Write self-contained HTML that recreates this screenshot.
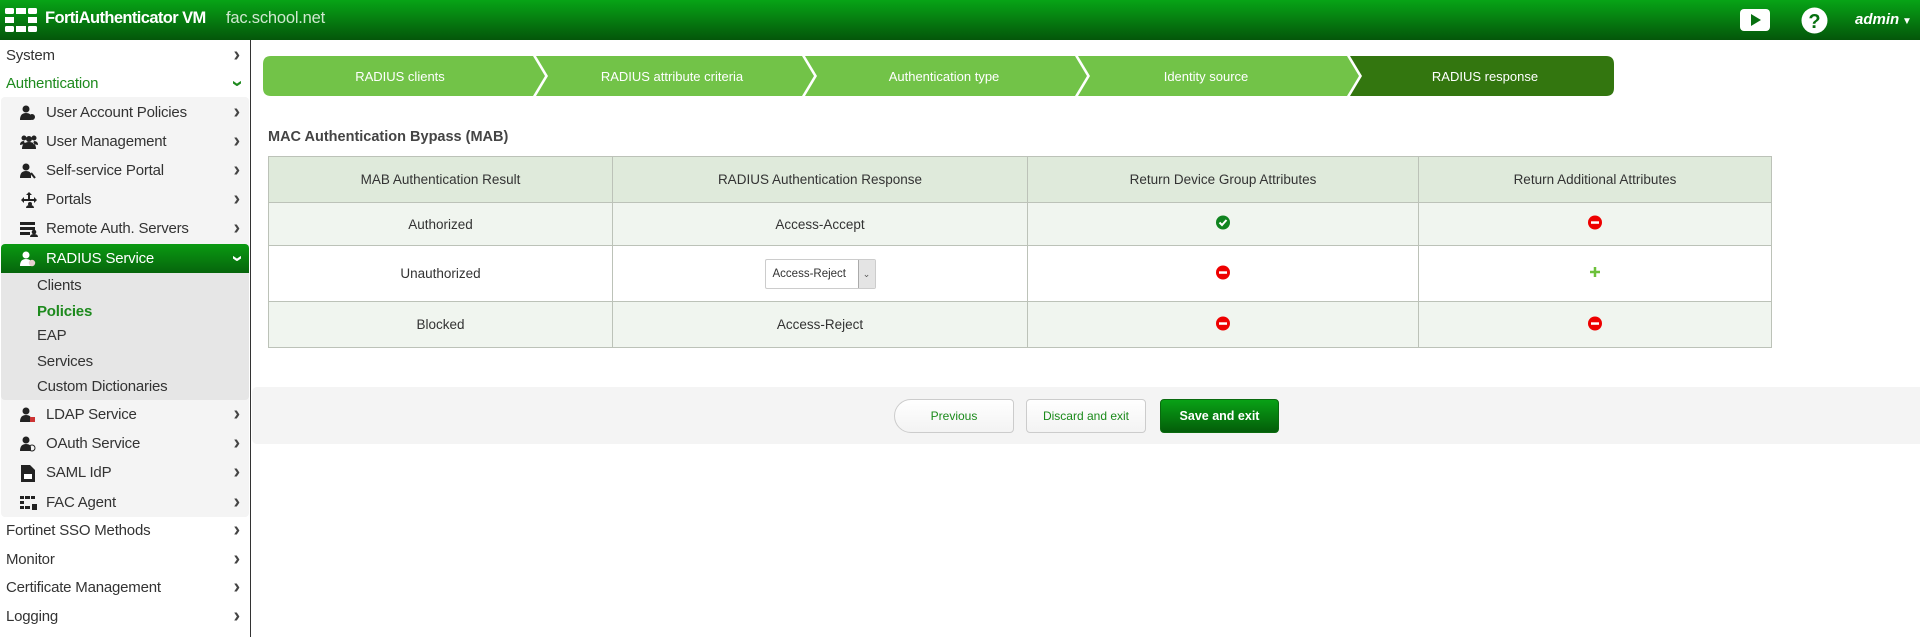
<!DOCTYPE html>
<html><head><meta charset="utf-8"><style>
*{margin:0;padding:0;box-sizing:border-box}
body{width:1920px;height:637px;overflow:hidden;background:#fff;font-family:"Liberation Sans",sans-serif;color:#333;position:relative}
.hdr{position:absolute;left:0;top:0;width:1920px;height:40px;background:linear-gradient(#07a416,#04560a)}
.side{position:absolute;left:0;top:40px;width:251px;height:597px;border-right:1px solid #333;background:#fff}
.it{position:absolute;left:0;width:250px;height:29px;font-size:15px;line-height:29px;color:#333;letter-spacing:-0.2px}
.it .ch{position:absolute;right:10px;top:0;font-size:20px;font-weight:bold;color:#444;line-height:29px}
.sub{padding-left:46px}
.sub2{padding-left:37px}
.top{padding-left:6px}
.ic{position:absolute;left:20px;top:7px}
.tbl{position:absolute;left:268px;top:156px;border-collapse:collapse;font-size:13.5px;color:#333}
.tbl td{border:1px solid #bcc2b8;text-align:center;vertical-align:middle}
.btn{position:absolute;top:399px;height:34px;font-size:12px;line-height:32px;text-align:center;color:#1a8a1a;border:1px solid #ccc;background:linear-gradient(#fff,#f3f3f3);border-radius:4px}
</style></head><body>
<div class="hdr">
 <svg style="position:absolute;left:5px;top:8px" width="32" height="24" viewBox="0 0 32 24">
  <g fill="#fff"><rect x="0" y="0" width="9" height="6" rx="1.5"/><rect x="11" y="0" width="10" height="6"/><rect x="23" y="0" width="9" height="6" rx="1.5"/>
  <rect x="0" y="9" width="9" height="6"/><rect x="23" y="9" width="9" height="6"/>
  <rect x="0" y="18" width="9" height="6" rx="1.5"/><rect x="11" y="18" width="10" height="6"/><rect x="23" y="18" width="9" height="6" rx="1.5"/></g></svg>
 <div style="position:absolute;left:45px;top:9px;font-size:16.5px;font-weight:bold;color:#fff;letter-spacing:-0.6px;white-space:nowrap">FortiAuthenticator VM</div>
 <div style="position:absolute;left:226px;top:9px;font-size:16.5px;color:#cfe8cf;letter-spacing:-0.2px">fac.school.net</div>
 <svg style="position:absolute;left:1740px;top:9px" width="30" height="22" viewBox="0 0 30 22"><rect width="30" height="22" rx="4" fill="#fff"/><path d="M11 5 L21 11 L11 17Z" fill="#07700f"/></svg>
 <svg style="position:absolute;left:1801px;top:7px" width="27" height="27" viewBox="0 0 27 27"><circle cx="13.5" cy="13.5" r="13" fill="#fff"/><text x="13.5" y="21" text-anchor="middle" font-family="Liberation Sans" font-weight="bold" font-size="20" fill="#06700f">?</text></svg>
 <div style="position:absolute;left:1855px;top:11px;font-size:15px;font-weight:bold;font-style:italic;color:#fff">admin<span style="font-style:normal;font-size:10px"> ▼</span></div>
</div>
<div class="side">
 <div class="it top" style="top:1px">System<span class="ch">›</span></div>
 <div class="it top" style="top:29px;color:#1e8a1e">Authentication<span class="ch" style="color:#1e8a1e;transform:rotate(90deg)">›</span></div>
 <div style="position:absolute;left:1px;top:57px;width:248px;height:420px;background:#f4f4f4;border-radius:4px"></div>
 <div class="it sub" style="top:58px">User Account Policies<span class="ch">›</span><svg class="ic" width="16" height="16"><circle cx="6" cy="4" r="3.5" fill="#222"/><path d="M0 15 Q0 8 6 8 Q11 8 11 12 L11 15Z" fill="#222"/><circle cx="12" cy="12" r="3" fill="#222"/></svg></div>
 <div class="it sub" style="top:87px">User Management<span class="ch">›</span><svg class="ic" width="18" height="16"><circle cx="4" cy="4" r="2.5" fill="#222"/><circle cx="14" cy="4" r="2.5" fill="#222"/><circle cx="9" cy="5" r="3" fill="#222"/><path d="M2 15 Q2 8 9 8 Q16 8 16 15Z M0 11 Q0 7 4 7 L5 10Z M18 11 Q18 7 14 7 L13 10Z" fill="#222"/></svg></div>
 <div class="it sub" style="top:116px">Self-service Portal<span class="ch">›</span><svg class="ic" width="16" height="16"><circle cx="6" cy="4" r="3.5" fill="#222"/><path d="M0 15 Q0 8 6 8 Q11 8 11 12 L11 15Z" fill="#222"/><path d="M11 10 L15 15" stroke="#222" stroke-width="2"/></svg></div>
 <div class="it sub" style="top:145px">Portals<span class="ch">›</span><svg class="ic" width="18" height="16"><path d="M9 0 L12 3 L10 3 L10 7 L14 7 L14 5 L17 8 L14 11 L14 9 L4 9 L4 11 L1 8 L4 5 L4 7 L8 7 L8 3 L6 3Z" fill="#222"/><circle cx="10" cy="12" r="2" fill="#222"/><path d="M6 16 Q6 13 10 13 Q14 13 14 16Z" fill="#222"/></svg></div>
 <div class="it sub" style="top:174px">Remote Auth. Servers<span class="ch">›</span><svg class="ic" width="18" height="16"><rect x="0" y="1" width="15" height="3" fill="#222"/><rect x="0" y="6" width="15" height="3" fill="#222"/><rect x="0" y="11" width="10" height="3" fill="#222"/><circle cx="14" cy="11" r="2.3" fill="#222"/><path d="M10 16 Q10 13 14 13 Q18 13 18 16Z" fill="#222"/></svg></div>
 <div style="position:absolute;left:1px;top:204px;width:248px;height:29px;background:linear-gradient(#0a9a12,#06650c);border-radius:4px 4px 0 0"></div>
 <div class="it sub" style="top:204px;color:#fff">RADIUS Service<span class="ch" style="color:#fff;transform:rotate(90deg)">›</span><svg class="ic" width="16" height="16"><circle cx="6" cy="4" r="3.5" fill="#fff"/><path d="M0 15 Q0 8 6 8 Q11 8 11 12 L11 15Z" fill="#fff"/><circle cx="12" cy="12" r="3.2" fill="#e8d0d0"/></svg></div>
 <div style="position:absolute;left:1px;top:233px;width:248px;height:127px;background:#e6e6e6;border-radius:0 0 4px 4px"></div>
 <div class="it sub2" style="top:231px">Clients</div>
 <div class="it sub2" style="top:257px;color:#1e8a1e;font-weight:bold">Policies</div>
 <div class="it sub2" style="top:281px">EAP</div>
 <div class="it sub2" style="top:307px">Services</div>
 <div class="it sub2" style="top:332px">Custom Dictionaries</div>
 <div class="it sub" style="top:360px">LDAP Service<span class="ch">›</span><svg class="ic" width="16" height="16"><circle cx="6" cy="4" r="3.5" fill="#222"/><path d="M0 15 Q0 8 6 8 Q11 8 11 12 L11 15Z" fill="#222"/><rect x="10" y="10" width="5" height="5" fill="#c33"/></svg></div>
 <div class="it sub" style="top:389px">OAuth Service<span class="ch">›</span><svg class="ic" width="16" height="16"><circle cx="6" cy="4" r="3.5" fill="#222"/><path d="M0 15 Q0 8 6 8 Q11 8 11 12 L11 15Z" fill="#222"/><circle cx="12" cy="12" r="3" fill="none" stroke="#222"/></svg></div>
 <div class="it sub" style="top:418px">SAML IdP<span class="ch">›</span><svg class="ic" width="16" height="18"><path d="M1 0 L10 0 L15 5 L15 17 L1 17Z" fill="#222"/><rect x="4" y="9" width="8" height="5" fill="#fff"/></svg></div>
 <div class="it sub" style="top:448px">FAC Agent<span class="ch">›</span><svg class="ic" width="18" height="16"><g fill="#222"><rect x="0" y="1" width="4" height="3"/><rect x="5" y="1" width="5" height="3"/><rect x="11" y="1" width="4" height="3"/><rect x="0" y="6" width="4" height="3"/><rect x="0" y="11" width="4" height="3"/><rect x="5" y="11" width="5" height="3"/><rect x="12" y="9" width="5" height="6"/></g></svg></div>
 <div class="it top" style="top:476px">Fortinet SSO Methods<span class="ch">›</span></div>
 <div class="it top" style="top:505px">Monitor<span class="ch">›</span></div>
 <div class="it top" style="top:533px">Certificate Management<span class="ch">›</span></div>
 <div class="it top" style="top:562px">Logging<span class="ch">›</span></div>
</div>

<svg style="position:absolute;left:263px;top:56px" width="1352" height="40" viewBox="0 0 1352 40" font-family="Liberation Sans" font-size="13" fill="#fff">
 <path d="M8 0 L270 0 L282 20 L270 40 L8 40 Q0 40 0 32 L0 8 Q0 0 8 0Z" fill="#72c348"/>
 <path d="M273 0 L539 0 L551 20 L539 40 L273 40 L285 20Z" fill="#72c348"/>
 <path d="M542 0 L812 0 L824 20 L812 40 L542 40 L554 20Z" fill="#72c348"/>
 <path d="M815 0 L1084 0 L1096 20 L1084 40 L815 40 L827 20Z" fill="#72c348"/>
 <path d="M1087 0 L1343 0 Q1351 0 1351 8 L1351 32 Q1351 40 1343 40 L1087 40 L1099 20Z" fill="#33760f"/>
 <text x="137" y="25" text-anchor="middle">RADIUS clients</text>
 <text x="409" y="25" text-anchor="middle">RADIUS attribute criteria</text>
 <text x="681" y="25" text-anchor="middle">Authentication type</text>
 <text x="943" y="25" text-anchor="middle">Identity source</text>
 <text x="1222" y="25" text-anchor="middle">RADIUS response</text>
</svg>

<div style="position:absolute;left:268px;top:129px;font-size:14.5px;font-weight:bold;color:#444">MAC Authentication Bypass (MAB)</div>

<table class="tbl">
 <tr style="height:46px;background:#dfeadb"><td style="width:344px">MAB Authentication Result</td><td style="width:415px">RADIUS Authentication Response</td><td style="width:391px">Return Device Group Attributes</td><td style="width:353px">Return Additional Attributes</td></tr>
 <tr style="height:43px;background:#f0f5ef"><td>Authorized</td><td>Access-Accept</td>
  <td><svg width="14" height="15"><circle cx="7" cy="7.5" r="7" fill="#10841f"/><path d="M3.5 7.5 L6 10 L10.5 5" stroke="#fff" stroke-width="2" fill="none"/></svg></td>
  <td><svg width="14" height="15"><circle cx="7" cy="7.5" r="7" fill="#e00"/><rect x="3" y="6.3" width="8" height="2.5" fill="#fff"/></svg></td></tr>
 <tr style="height:56px;background:#fff"><td>Unauthorized</td><td><div style="display:inline-block;width:111px;height:30px;border:1px solid #ccc;border-radius:2px;position:relative;text-align:left;font-size:11.5px;line-height:28px;padding-left:7px;background:#fff">Access-Reject<span style="position:absolute;right:0;top:0;width:17px;height:28px;background:#e4e4e4;border-left:1px solid #aaa;font-size:9px;text-align:center;color:#555">&#8964;</span></div></td>
  <td><svg width="14" height="15"><circle cx="7" cy="7.5" r="7" fill="#e00"/><rect x="3" y="6.3" width="8" height="2.5" fill="#fff"/></svg></td>
  <td><svg width="12" height="12"><path d="M6 1 V11 M1 6 H11" stroke="#6cc13a" stroke-width="2.5"/></svg></td></tr>
 <tr style="height:46px;background:#f0f5ef"><td>Blocked</td><td>Access-Reject</td>
  <td><svg width="14" height="15"><circle cx="7" cy="7.5" r="7" fill="#e00"/><rect x="3" y="6.3" width="8" height="2.5" fill="#fff"/></svg></td>
  <td><svg width="14" height="15"><circle cx="7" cy="7.5" r="7" fill="#e00"/><rect x="3" y="6.3" width="8" height="2.5" fill="#fff"/></svg></td></tr>
</table>

<div style="position:absolute;left:252px;top:387px;width:1668px;height:57px;background:#f4f4f4;border-radius:5px 0 0 5px"></div>
<div class="btn" style="left:894px;width:120px;border-radius:17px 4px 4px 17px">Previous</div>
<div class="btn" style="left:1026px;width:120px">Discard and exit</div>
<div class="btn" style="left:1160px;width:119px;color:#fff;font-weight:bold;font-size:12.5px;background:linear-gradient(#09a116,#035d09);border-color:#0a6a0f">Save and exit</div>
</body></html>
